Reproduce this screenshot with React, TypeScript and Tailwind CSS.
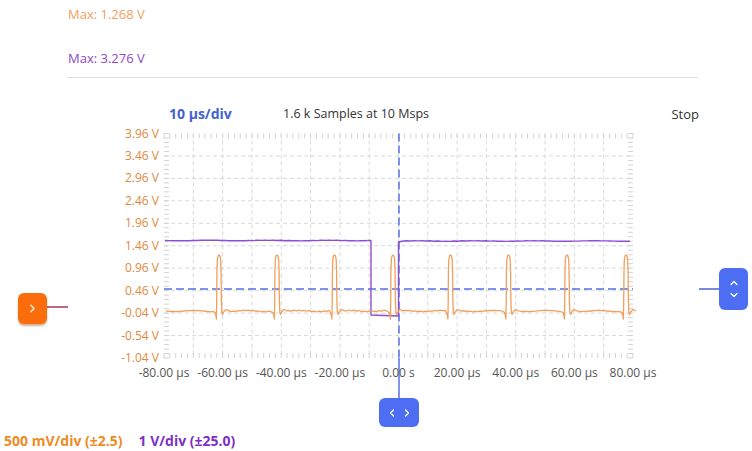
import { ChevronDown, ChevronLeft, ChevronRight, ChevronUp } from 'lucide-react'

// plot area in page coordinates
const X0 = 164
const X1 = 633
const Y0 = 133.5
const Y1 = 358
const DX = (X1 - X0) / 16
const DY = (Y1 - Y0) / 10

const yLabels = ['3.96 V', '3.46 V', '2.96 V', '2.46 V', '1.96 V', '1.46 V', '0.96 V', '0.46 V', '-0.04 V', '-0.54 V', '-1.04 V']
const xLabels = ['-80.00 µs', '-60.00 µs', '-40.00 µs', '-20.00 µs', '0.00 s', '20.00 µs', '40.00 µs', '60.00 µs', '80.00 µs']

function noise(i: number) {
  return Math.sin(i * 12.9898) * 0.6 + Math.sin(i * 3.17) * 0.4
}

const spike: [number, number][] = [
  [-4, 312.5], [-3, 316], [-2.6, 319], [-2.3, 302], [-2.05, 272], [-1.7, 260], [-1, 256], [0, 255],
  [1, 256], [1.7, 260], [2.1, 274], [2.4, 300], [2.8, 312], [3.6, 314.5], [5, 311.5], [7, 309.5], [10, 310.8],
]

function orangePath() {
  const centers = [219, 277, 334.5, 393, 450.5, 508.5, 567, 626]
  const pts: string[] = []
  let x = 166
  let i = 0
  for (const c of centers) {
    while (x < c - 5) {
      pts.push(`${x.toFixed(1)},${(311 + noise(i++)).toFixed(1)}`)
      x += 2.5
    }
    for (const [dx, y] of spike) pts.push(`${(c + dx).toFixed(1)},${y}`)
    x = c + 12
  }
  while (x < 630) {
    pts.push(`${x.toFixed(1)},${(311 + noise(i++)).toFixed(1)}`)
    x += 2.5
  }
  return 'M' + pts.join(' L')
}

function purplePath() {
  const pts: string[] = []
  let i = 0
  for (let x = 165; x <= 371; x += 4) pts.push(`${x},${(240.5 + noise(i++) * 0.4).toFixed(1)}`)
  pts.push('371,240.5', '371,315', '384,315.5', '398.5,316', '398.5,242')
  for (let x = 402; x <= 630; x += 4) pts.push(`${x},${(241 + noise(i++) * 0.4).toFixed(1)}`)
  return 'M' + pts.join(' L')
}

function Scope() {
  const vGrid = Array.from({ length: 15 }, (_, k) => X0 + (k + 1) * DX)
  const hGrid = Array.from({ length: 9 }, (_, k) => Y0 + (k + 1) * DY)
  const xTicks = Array.from({ length: 81 }, (_, k) => X0 + (k * DX) / 5)
  const yTicks = Array.from({ length: 51 }, (_, k) => Y0 + (k * DY) / 5)

  return (
    <svg width={752} height={280} viewBox="0 122 752 280" className="block">
      {vGrid.map((x) => (
        <line key={'v' + x} x1={x} y1={Y0} x2={x} y2={Y1} stroke="#d9d9d9" strokeDasharray="4 3" />
      ))}
      {hGrid.map((y) => (
        <line key={'h' + y} x1={X0} y1={y} x2={X1} y2={y} stroke="#d9d9d9" strokeDasharray="4 3" />
      ))}
      {xTicks.map((x) => (
        <g key={'xt' + x} stroke="#d2d2d2">
          <line x1={x} y1={Y0} x2={x} y2={Y0 + 5} />
          <line x1={x} y1={Y1 - 5} x2={x} y2={Y1} />
        </g>
      ))}
      {yTicks.map((y) => (
        <g key={'yt' + y} stroke="#d2d2d2">
          <line x1={X0} y1={y} x2={X0 + 5} y2={y} />
          <line x1={X1 - 5} y1={y} x2={X1} y2={y} />
        </g>
      ))}

      {/* trigger lines */}
      <line x1={X0} y1={289} x2={X1} y2={289} stroke="#5470e6" strokeWidth={1.5} strokeDasharray="8 4" />
      <line x1={699} y1={289} x2={719} y2={289} stroke="#4d62c8" strokeWidth={1.5} />
      <line x1={399} y1={Y0} x2={399} y2={Y1} stroke="#5470e6" strokeWidth={1.5} strokeDasharray="8 4" />
      <line x1={399} y1={Y1} x2={399} y2={399} stroke="#5470e6" strokeWidth={1.5} />
      <line x1={47} y1={307} x2={68} y2={307} stroke="#a3394f" strokeWidth={1.5} />

      <path d={purplePath()} fill="none" stroke="#8d4fd2" strokeWidth={1.4} strokeLinejoin="round" />
      <path d={orangePath()} fill="none" stroke="#f0a05c" strokeWidth={1.3} strokeLinejoin="round" />

      <g fontFamily="'Open Sans', sans-serif" fontSize={12}>
        {yLabels.map((t, k) => (
          <text key={t} x={159} y={Y0 + k * DY + 4} textAnchor="end" fill="#e0893e">
            {t}
          </text>
        ))}
        {xLabels.map((t, k) => (
          <text key={t} x={X0 + k * 2 * DX} y={377} textAnchor="middle" fill="#555555">
            {t}
          </text>
        ))}
      </g>
    </svg>
  )
}

export default function App() {
  return (
    <div className="relative w-[752px] h-[451px] overflow-hidden bg-white font-['Open_Sans',sans-serif] text-[13px] leading-4">
      <div className="ml-[68px] w-[630px] pt-[6px]">
        <div className="text-[#f0a060]">Max: 1.268 V</div>
        <div className="mt-7 text-[#8e48c8]">Max: 3.276 V</div>
        <div className="mt-[11px] border-t border-[#dcdcdc]" />
      </div>

      <div className="mt-[28px] ml-[169px] flex h-4 w-[530px] items-center text-[12.5px]">
        <span className="w-[114px] text-[14px] font-bold text-[#4461d2]">10 µs/div</span>
        <span className="text-[#333]">1.6 k Samples at 10 Msps</span>
        <span className="ml-auto text-[13px] text-[#333]">Stop</span>
      </div>

      <Scope />

      <div className="mt-[31px] ml-[4px] flex gap-[16px] text-[14px] font-bold">
        <span className="text-[#f08a24]">500 mV/div (±2.5)</span>
        <span className="text-[#7e30c4]">1 V/div (±25.0)</span>
      </div>

      <button className="absolute left-[18px] top-[293px] flex h-[31px] w-[29px] items-center justify-center rounded-md bg-[#fb6c0c] text-[#fff4e0] shadow-[0_2px_2px_rgba(150,60,0,0.4)]">
        <ChevronRight size={13} strokeWidth={2.5} />
      </button>
      <button className="absolute left-[719px] top-[268px] flex h-[42px] w-[29px] flex-col items-center justify-center rounded-md bg-[#4d6ef2] text-white">
        <ChevronUp size={12} strokeWidth={2.5} />
        <ChevronDown size={12} strokeWidth={2.5} />
      </button>
      <button className="absolute left-[379px] top-[398px] flex h-[29px] w-[40px] items-center justify-center gap-[3px] rounded-md bg-[#4d6ef2] text-white">
        <ChevronLeft size={12} strokeWidth={2.5} />
        <ChevronRight size={12} strokeWidth={2.5} />
      </button>
    </div>
  )
}
